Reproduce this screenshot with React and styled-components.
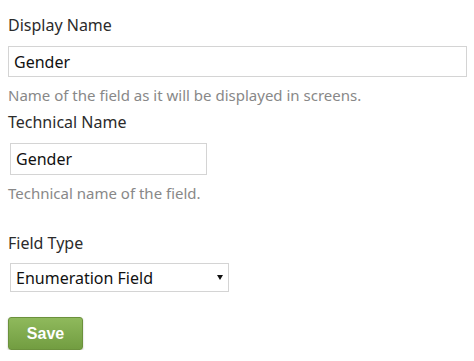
import React from 'react';
import styled, { createGlobalStyle } from 'styled-components';

const GlobalStyle = createGlobalStyle`
  body {
    margin: 0;
    background: #fff;
    font-family: "Noto Sans", "Open Sans", sans-serif;
    color: #222;
  }
`;

const Form = styled.form`
  display: flex;
  flex-direction: column;
  align-items: flex-start;
  padding: 14px 7px 0 8px;
`;

const Label = styled.label`
  display: block;
  font-size: 16px;
  line-height: 22px;
  color: #2b2b2b;
  margin-top: ${p => p.$gap || 0}px;
`;

const Input = styled.input`
  box-sizing: border-box;
  width: ${p => p.$width}px;
  height: ${p => p.$height || 31}px;
  margin: 10px 0 0 ${p => p.$indent || 0}px;
  padding: 0 5px;
  border: 1px solid #d4d4d4;
  font-family: inherit;
  font-size: 16px;
  color: #111;
  outline: none;
`;

const Help = styled.div`
  margin-top: 8px;
  font-size: 15px;
  line-height: 20px;
  color: #888;
`;

const SelectWrap = styled.div`
  position: relative;
  margin: 9px 0 0 2px;
`;

const Select = styled.select`
  box-sizing: border-box;
  width: 219px;
  height: 29px;
  padding: 0 5px;
  border: 1px solid #d4d4d4;
  background: #fff;
  font-family: inherit;
  font-size: 16px;
  color: #111;
  appearance: none;
  outline: none;
`;

const Arrow = styled.span`
  position: absolute;
  right: 6px;
  top: 12px;
  width: 0;
  height: 0;
  border-left: 3px solid transparent;
  border-right: 3px solid transparent;
  border-top: 5px solid #111;
  pointer-events: none;
`;

const SaveButton = styled.button`
  margin-top: 25px;
  width: 75px;
  height: 33px;
  border: 1px solid #6b913c;
  border-radius: 3px;
  background: linear-gradient(#8fb95c, #729d41);
  color: #fff;
  font-family: "Liberation Sans", Arial, sans-serif;
  font-weight: bold;
  font-size: 16px;
  box-shadow: 0 1px 2px rgba(0, 0, 0, 0.25);
  cursor: pointer;
`;

export default function App() {
  return (
    <>
      <GlobalStyle />
      <Form onSubmit={e => e.preventDefault()}>
        <Label>Display Name</Label>
        <Input $width={459} defaultValue="Gender" />
        <Help>Name of the field as it will be displayed in screens.</Help>
        <Label $gap={6}>Technical Name</Label>
        <Input $width={197} $height={32} $indent={2} defaultValue="Gender" />
        <Help>Technical name of the field.</Help>
        <Label $gap={29}>Field Type</Label>
        <SelectWrap>
          <Select defaultValue="enum">
            <option value="enum">Enumeration Field</option>
            <option value="text">Text Field</option>
          </Select>
          <Arrow />
        </SelectWrap>
        <SaveButton type="submit">Save</SaveButton>
      </Form>
    </>
  );
}
